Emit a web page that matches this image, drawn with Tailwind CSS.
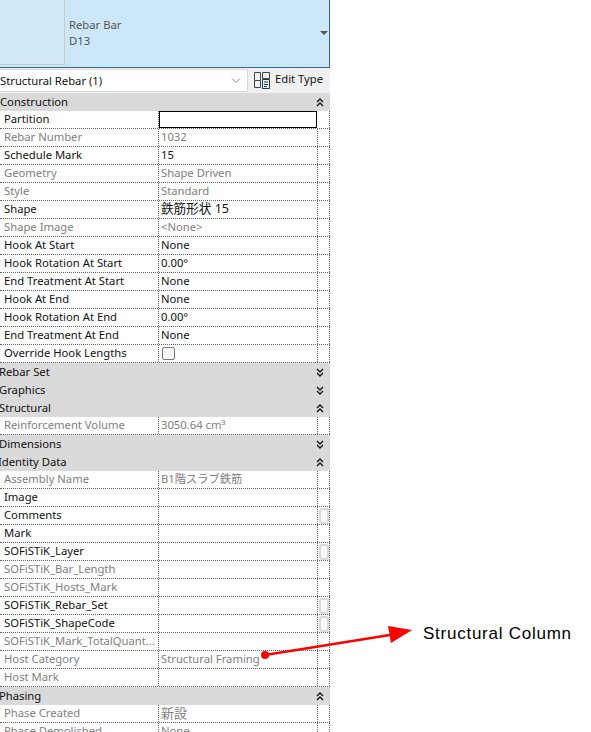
<!DOCTYPE html>
<html><head><meta charset="utf-8"><script src="https://cdn.jsdelivr.net/npm/@tailwindcss/browser@4"></script></head>
<body class="bg-white">
<div class="relative h-[732px] w-[591px] overflow-hidden bg-white font-['Noto_Sans','Noto_Sans_CJK_JP',sans-serif] text-[11.25px] leading-[16px] text-[#111]">
  <div class="w-[330px]">
    <div class="relative flex h-[68px] border-r border-b border-[#2a6cab] bg-[#cce8f8]">
      <div class="h-[65px] w-[65px] border-r border-b border-[#c9c9c0] bg-[#d2e9f7]"></div>
      <div class="pl-[4px] pt-[17px] text-[#555]"><div>Rebar Bar</div><div>D13</div></div>
      <div class="absolute right-[1px] top-[31px] h-0 w-0 border-x-[4px] border-t-[4px] border-x-transparent border-t-[#555]"></div>
    </div>
    <div class="flex h-[25px] items-center bg-[#f0f0f0]">
      <div class="flex h-[23px] w-[248px] items-center justify-between border border-l-0 border-[#d9d9d9] bg-white pr-[6px]"><span>Structural Rebar (1)</span>
        <svg width="10" height="6" viewBox="0 0 10 6" fill="none" stroke="#888"><path d="M1 .5 5 4.500 9 .5"/></svg></div>
      <svg class="ml-[5px] -mt-[2px]" width="18" height="18" viewBox="0 0 18 18" fill="none"><path stroke="#444" d="M1.500 1.500h6v8h-6zM1.500 9.500h6v7h-6zM9.500 1.500h7v6h-7z"/><path stroke="#25384a" fill="#e8f0f6" d="M9.500 8.500h7v9h-7z"/><path stroke="#25384a" d="M11 11h4M11 13.500h4M11 15.500h3"/></svg>
      <span class="ml-[4px] -mt-[3px]">Edit Type</span>
    </div>

    <div class="flex h-[18px] items-center justify-between bg-[#dadada] pr-[6px]"><span>Construction</span><svg width="8" height="9" viewBox="0 0 8 9" fill="none" stroke="#111" stroke-width="1.300"><path d="M1 4 4 1l3 3M1 8 4 5l3 3"/></svg></div>
    <div class="grid h-[18px] grid-cols-[159px_159px_12px] border-b border-dotted border-[#666]"><div class="border-r border-dotted border-[#666] pl-[4px]">Partition</div><div class="h-[17px] w-[158px] border border-black"></div><div class="border-r border-dotted border-[#666]"></div></div>
    <div class="grid h-[18px] grid-cols-[159px_159px_12px] border-b border-dotted border-[#666] text-[#808080]"><div class="border-r border-dotted border-[#666] pl-[4px]">Rebar Number</div><div class="border-r border-dotted border-[#666] pl-[2px]">1032</div><div class="border-r border-dotted border-[#666]"></div></div>
    <div class="grid h-[18px] grid-cols-[159px_159px_12px] border-b border-dotted border-[#666]"><div class="border-r border-dotted border-[#666] pl-[4px]">Schedule Mark</div><div class="border-r border-dotted border-[#666] pl-[2px]">15</div><div class="border-r border-dotted border-[#666]"></div></div>
    <div class="grid h-[18px] grid-cols-[159px_159px_12px] border-b border-dotted border-[#666] text-[#808080]"><div class="border-r border-dotted border-[#666] pl-[4px]">Geometry</div><div class="border-r border-dotted border-[#666] pl-[2px]">Shape Driven</div><div class="border-r border-dotted border-[#666]"></div></div>
    <div class="grid h-[18px] grid-cols-[159px_159px_12px] border-b border-dotted border-[#666] text-[#808080]"><div class="border-r border-dotted border-[#666] pl-[4px]">Style</div><div class="border-r border-dotted border-[#666] pl-[2px]">Standard</div><div class="border-r border-dotted border-[#666]"></div></div>
    <div class="grid h-[18px] grid-cols-[159px_159px_12px] border-b border-dotted border-[#666]"><div class="border-r border-dotted border-[#666] pl-[4px]">Shape</div><div class="border-r border-dotted border-[#666] pl-[2px] text-[12.6px]">鉄筋形状 15</div><div class="border-r border-dotted border-[#666]"></div></div>
    <div class="grid h-[18px] grid-cols-[159px_159px_12px] border-b border-dotted border-[#666] text-[#808080]"><div class="border-r border-dotted border-[#666] pl-[4px]">Shape Image</div><div class="border-r border-dotted border-[#666] pl-[2px]">&lt;None&gt;</div><div class="border-r border-dotted border-[#666]"></div></div>
    <div class="grid h-[18px] grid-cols-[159px_159px_12px] border-b border-dotted border-[#666]"><div class="border-r border-dotted border-[#666] pl-[4px]">Hook At Start</div><div class="border-r border-dotted border-[#666] pl-[2px]">None</div><div class="border-r border-dotted border-[#666]"></div></div>
    <div class="grid h-[18px] grid-cols-[159px_159px_12px] border-b border-dotted border-[#666]"><div class="border-r border-dotted border-[#666] pl-[4px]">Hook Rotation At Start</div><div class="border-r border-dotted border-[#666] pl-[2px]">0.00°</div><div class="border-r border-dotted border-[#666]"></div></div>
    <div class="grid h-[18px] grid-cols-[159px_159px_12px] border-b border-dotted border-[#666]"><div class="border-r border-dotted border-[#666] pl-[4px]">End Treatment At Start</div><div class="border-r border-dotted border-[#666] pl-[2px]">None</div><div class="border-r border-dotted border-[#666]"></div></div>
    <div class="grid h-[18px] grid-cols-[159px_159px_12px] border-b border-dotted border-[#666]"><div class="border-r border-dotted border-[#666] pl-[4px]">Hook At End</div><div class="border-r border-dotted border-[#666] pl-[2px]">None</div><div class="border-r border-dotted border-[#666]"></div></div>
    <div class="grid h-[18px] grid-cols-[159px_159px_12px] border-b border-dotted border-[#666]"><div class="border-r border-dotted border-[#666] pl-[4px]">Hook Rotation At End</div><div class="border-r border-dotted border-[#666] pl-[2px]">0.00°</div><div class="border-r border-dotted border-[#666]"></div></div>
    <div class="grid h-[18px] grid-cols-[159px_159px_12px] border-b border-dotted border-[#666]"><div class="border-r border-dotted border-[#666] pl-[4px]">End Treatment At End</div><div class="border-r border-dotted border-[#666] pl-[2px]">None</div><div class="border-r border-dotted border-[#666]"></div></div>
    <div class="grid h-[18px] grid-cols-[159px_159px_12px] border-b border-dotted border-[#666]"><div class="border-r border-dotted border-[#666] pl-[4px]">Override Hook Lengths</div><div class="flex items-center border-r border-dotted border-[#666] pl-[3px]"><div class="h-[13px] w-[13px] rounded-[2px] border border-[#777] bg-[#f7f7f7]"></div></div><div class="border-r border-dotted border-[#666]"></div></div>

    <div class="flex h-[18px] items-center justify-between bg-[#dadada] pr-[6px] -indent-[1px]"><span>Rebar Set</span><svg width="8" height="9" viewBox="0 0 8 9" fill="none" stroke="#111" stroke-width="1.300"><path d="M1 1l3 3 3-3M1 5l3 3 3-3"/></svg></div>
    <div class="flex h-[18px] items-center justify-between bg-[#dadada] pr-[6px] -indent-[1px]"><span>Graphics</span><svg width="8" height="9" viewBox="0 0 8 9" fill="none" stroke="#111" stroke-width="1.300"><path d="M1 1l3 3 3-3M1 5l3 3 3-3"/></svg></div>
    <div class="flex h-[18px] items-center justify-between bg-[#dadada] pr-[6px] -indent-[1px]"><span>Structural</span><svg width="8" height="9" viewBox="0 0 8 9" fill="none" stroke="#111" stroke-width="1.300"><path d="M1 4 4 1l3 3M1 8 4 5l3 3"/></svg></div>
    <div class="grid h-[18px] grid-cols-[159px_159px_12px] border-b border-dotted border-[#666] text-[#808080]"><div class="border-r border-dotted border-[#666] pl-[4px]">Reinforcement Volume</div><div class="border-r border-dotted border-[#666] pl-[2px]">3050.64 cm³</div><div class="border-r border-dotted border-[#666]"></div></div>
    <div class="flex h-[18px] items-center justify-between bg-[#dadada] pr-[6px] -indent-[1px]"><span>Dimensions</span><svg width="8" height="9" viewBox="0 0 8 9" fill="none" stroke="#111" stroke-width="1.300"><path d="M1 1l3 3 3-3M1 5l3 3 3-3"/></svg></div>
    <div class="flex h-[18px] items-center justify-between bg-[#dadada] pr-[6px] -indent-[2px]"><span>Identity Data</span><svg width="8" height="9" viewBox="0 0 8 9" fill="none" stroke="#111" stroke-width="1.300"><path d="M1 4 4 1l3 3M1 8 4 5l3 3"/></svg></div>

    <div class="grid h-[18px] grid-cols-[159px_159px_12px] border-b border-dotted border-[#666] text-[#808080]"><div class="border-r border-dotted border-[#666] pl-[4px]">Assembly Name</div><div class="border-r border-dotted border-[#666] pl-[2px]">B1階スラブ鉄筋</div><div class="border-r border-dotted border-[#666]"></div></div>
    <div class="grid h-[18px] grid-cols-[159px_159px_12px] border-b border-dotted border-[#666]"><div class="border-r border-dotted border-[#666] pl-[4px]">Image</div><div class="border-r border-dotted border-[#666]"></div><div class="border-r border-dotted border-[#666]"></div></div>
    <div class="grid h-[18px] grid-cols-[159px_159px_12px] border-b border-dotted border-[#666]"><div class="border-r border-dotted border-[#666] pl-[4px]">Comments</div><div class="border-r border-dotted border-[#666]"></div><div class="flex items-center border-r border-dotted border-[#666] pl-[1px]"><div class="h-[16px] w-[10px] rounded-[3px] border-2 border-[#d8d8d8] bg-[#f8f8f8]"></div></div></div>
    <div class="grid h-[18px] grid-cols-[159px_159px_12px] border-b border-dotted border-[#666]"><div class="border-r border-dotted border-[#666] pl-[4px]">Mark</div><div class="border-r border-dotted border-[#666]"></div><div class="border-r border-dotted border-[#666]"></div></div>
    <div class="grid h-[18px] grid-cols-[159px_159px_12px] border-b border-dotted border-[#666]"><div class="border-r border-dotted border-[#666] pl-[4px]">SOFiSTiK_Layer</div><div class="border-r border-dotted border-[#666]"></div><div class="flex items-center border-r border-dotted border-[#666] pl-[1px]"><div class="h-[16px] w-[10px] rounded-[3px] border-2 border-[#d8d8d8] bg-[#f8f8f8]"></div></div></div>
    <div class="grid h-[18px] grid-cols-[159px_159px_12px] border-b border-dotted border-[#666] text-[#808080]"><div class="border-r border-dotted border-[#666] pl-[4px]">SOFiSTiK_Bar_Length</div><div class="border-r border-dotted border-[#666]"></div><div class="border-r border-dotted border-[#666]"></div></div>
    <div class="grid h-[18px] grid-cols-[159px_159px_12px] border-b border-dotted border-[#666] text-[#808080]"><div class="border-r border-dotted border-[#666] pl-[4px]">SOFiSTiK_Hosts_Mark</div><div class="border-r border-dotted border-[#666]"></div><div class="border-r border-dotted border-[#666]"></div></div>
    <div class="grid h-[18px] grid-cols-[159px_159px_12px] border-b border-dotted border-[#666]"><div class="border-r border-dotted border-[#666] pl-[4px]">SOFiSTiK_Rebar_Set</div><div class="border-r border-dotted border-[#666]"></div><div class="flex items-center border-r border-dotted border-[#666] pl-[1px]"><div class="h-[16px] w-[10px] rounded-[3px] border-2 border-[#d8d8d8] bg-[#f8f8f8]"></div></div></div>
    <div class="grid h-[18px] grid-cols-[159px_159px_12px] border-b border-dotted border-[#666]"><div class="border-r border-dotted border-[#666] pl-[4px]">SOFiSTiK_ShapeCode</div><div class="border-r border-dotted border-[#666]"></div><div class="flex items-center border-r border-dotted border-[#666] pl-[1px]"><div class="h-[16px] w-[10px] rounded-[3px] border-2 border-[#d8d8d8] bg-[#f8f8f8]"></div></div></div>
    <div class="grid h-[18px] grid-cols-[159px_159px_12px] border-b border-dotted border-[#666] text-[#808080]"><div class="overflow-hidden whitespace-nowrap border-r border-dotted border-[#666] pl-[4px]">SOFiSTiK_Mark_TotalQuant...</div><div class="border-r border-dotted border-[#666]"></div><div class="border-r border-dotted border-[#666]"></div></div>
    <div class="grid h-[18px] grid-cols-[159px_159px_12px] border-b border-dotted border-[#666] text-[#808080]"><div class="border-r border-dotted border-[#666] pl-[4px]">Host Category</div><div class="border-r border-dotted border-[#666] pl-[2px]">Structural Framing</div><div class="border-r border-dotted border-[#666]"></div></div>
    <div class="grid h-[18px] grid-cols-[159px_159px_12px] border-b border-dotted border-[#666] text-[#808080]"><div class="border-r border-dotted border-[#666] pl-[4px]">Host Mark</div><div class="border-r border-dotted border-[#666]"></div><div class="border-r border-dotted border-[#666]"></div></div>

    <div class="flex h-[18px] items-center justify-between bg-[#dadada] pr-[6px] -indent-[1px]"><span>Phasing</span><svg width="8" height="9" viewBox="0 0 8 9" fill="none" stroke="#111" stroke-width="1.300"><path d="M1 4 4 1l3 3M1 8 4 5l3 3"/></svg></div>
    <div class="grid h-[18px] grid-cols-[159px_159px_12px] border-b border-dotted border-[#666] text-[#808080]"><div class="border-r border-dotted border-[#666] pl-[4px]">Phase Created</div><div class="border-r border-dotted border-[#666] pl-[2px] text-[13px]">新設</div><div class="border-r border-dotted border-[#666]"></div></div>
    <div class="grid h-[18px] grid-cols-[159px_159px_12px] border-b border-dotted border-[#666] text-[#808080]"><div class="border-r border-dotted border-[#666] pl-[4px]">Phase Demolished</div><div class="border-r border-dotted border-[#666] pl-[2px]">None</div><div class="border-r border-dotted border-[#666]"></div></div>
  </div>

  <svg class="absolute left-0 top-0" width="591" height="732" viewBox="0 0 591 732"><path d="M265 655 396 634" stroke="#f00" stroke-width="2.500"/><circle cx="265" cy="655" r="4" fill="#f00"/><path d="M388 626 412 630 391 643z" fill="#f00"/></svg>
  <div class="absolute left-[423px] top-[623px] font-['Liberation_Sans',sans-serif] text-[17px] leading-[22px] tracking-[0.75px] text-black">Structural Column</div>
</div>
</body></html>
